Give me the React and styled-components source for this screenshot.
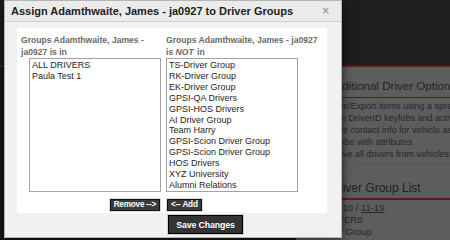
import React from "react";
import styled, { createGlobalStyle } from "styled-components";

const Global = createGlobalStyle`
  html, body { margin: 0; padding: 0; background: #181818; }
  body { font-family: "Liberation Sans", Arial, sans-serif; }
`;

const Stage = styled.div`
  position: relative;
  width: 450px;
  height: 240px;
  overflow: hidden;
`;

/* ---------- background page ---------- */
const PageBg = styled.div`
  display: flex;
  flex-direction: column;
  width: 100%;
  height: 100%;
  background: #3e3e3e;
`;

const TopBar = styled.div`
  height: 65px;
  background: #4b4b4b;
  border-bottom: 2px solid #ff3a3a;
  flex: none;
`;

const PageRow = styled.div`
  display: flex;
  flex: 1;
`;

const Side = styled.div`
  width: 296px;
  flex: none;
`;

const Main = styled.div`
  flex: 1;
  min-width: 0;
  overflow: hidden;
  background: #e8e8e8;
  color: #666;
  font-family: "Liberation Sans", Arial, sans-serif;
`;

const SectionHead = styled.div`
  height: 31px;
  box-sizing: border-box;
  padding: 12px 0 0 32px;
  font-size: 11.6px;
  line-height: 14px;
  color: #555;
  white-space: nowrap;
  border-bottom: 1px solid #ff3a3a;
`;

const LinkList = styled.div`
  padding: 2px 0 3px 23px;
  font-size: 9px;
  line-height: 12px;
  white-space: nowrap;
  border-bottom: 1px solid #d4d4d4;
`;

const SectionHead2 = styled.div`
  height: 36px;
  box-sizing: border-box;
  padding: 17px 0 0 34px;
  font-size: 12px;
  line-height: 14px;
  color: #555;
  white-space: nowrap;
  border-bottom: 2px solid #ff3a3a;
`;

const Pager = styled.div`
  padding: 2px 0 0 38px;
  font-size: 9.5px;
  line-height: 12px;
  white-space: nowrap;
  a { color: #666; text-decoration: underline; }
`;

const GroupRow = styled.div`
  padding-left: 6px;
  font-size: 9.5px;
  line-height: 12px;
  white-space: nowrap;
`;

const Overlay = styled.div`
  position: absolute;
  inset: 0;
  background: rgba(0, 0, 0, 0.6);
`;

/* ---------- dialog ---------- */
const Dialog = styled.div`
  position: absolute;
  left: 4px;
  top: 0;
  width: 338px;
  box-sizing: border-box;
  background: #f1f1f1;
  border: 1px solid #b5b5b5;
  box-shadow: 0 0 10px rgba(0, 0, 0, 0.7);
  display: flex;
  flex-direction: column;
`;

const TitleBar = styled.div`
  height: 21px;
  box-sizing: border-box;
  display: flex;
  align-items: center;
  justify-content: space-between;
  padding: 0 11px 0 6px;
  background: #ebebeb;
  border-bottom: 1px solid #cfcfcf;
`;

const Title = styled.div`
  font-family: "Liberation Sans", Arial, sans-serif;
  font-weight: bold;
  font-size: 11px;
  color: #222;
  white-space: nowrap;
`;

const Close = styled.span`
  font-family: "DejaVu Sans", sans-serif;
  font-size: 10px;
  color: #8a8a8a;
  line-height: 1;
`;

const Body = styled.div`
  padding: 6px 14px 3px 12px;
`;

const Panel = styled.div`
  background: #fff;
  padding: 6px 4px 2px 4px;
  display: grid;
  grid-template-columns: 141px 157px;
  column-gap: 4px;
  row-gap: 0;
`;

const ColHead = styled.div`
  font-family: "Liberation Sans", Arial, sans-serif;
  font-weight: bold;
  font-size: 8.6px;
  line-height: 12px;
  color: #6a6a6a;
  em { font-style: italic; padding-right: 1px; }
`;

const ListBox = styled.div`
  justify-self: ${(p) => (p.$side === "left" ? "end" : "start")};
  margin-right: ${(p) => (p.$side === "left" ? "1px" : "0")};
  width: 132px;
  height: 134px;
  box-sizing: border-box;
  border: 1px solid #a3a3a3;
  background: #fff;
  padding: 1px 0 0 2px;
  overflow: hidden;
`;

const Option = styled.div`
  font-family: "Liberation Sans", Arial, sans-serif;
  font-size: 9px;
  line-height: 10.9px;
  color: #1e1e1e;
  white-space: nowrap;
`;

const SmallBtn = styled.button`
  justify-self: ${(p) => (p.$side === "left" ? "end" : "start")};
  margin: 7px ${(p) => (p.$side === "left" ? "2px" : "0")} 0 ${(p) => (p.$side === "left" ? "0" : "1px")};
  height: 12px;
  box-sizing: border-box;
  padding: 0 3px;
  background: #3a3a3a;
  border: 1px solid #111;
  outline: 1px solid #ddd;
  color: #fff;
  font-family: "Liberation Sans", Arial, sans-serif;
  font-weight: bold;
  font-size: 8.2px;
  letter-spacing: -0.2px;
  line-height: 10px;
  border-radius: 0;
  white-space: nowrap;
`;

const Footer = styled.div`
  display: flex;
  padding: 2px 0 0 151px;
`;

const SaveBtn = styled.button`
  height: 19px;
  width: 75px;
  box-sizing: border-box;
  padding: 0;
  background: #333;
  border: 1px solid #000;
  outline: 1px solid #d0d0d0;
  color: #fff;
  font-family: "Liberation Sans", Arial, sans-serif;
  font-weight: bold;
  font-size: 8.8px;
  letter-spacing: -0.15px;
  border-radius: 0;
  white-space: nowrap;
`;

const inGroups = ["ALL DRIVERS", "Paula Test 1"];
const notInGroups = [
  "TS-Driver Group",
  "RK-Driver Group",
  "EK-Driver Group",
  "GPSI-QA Drivers",
  "GPSI-HOS Drivers",
  "AI Driver Group",
  "Team Harry",
  "GPSI-Scion Driver Group",
  "GPSI-Scion Driver Group",
  "HOS Drivers",
  "XYZ University",
  "Alumni Relations",
];

export default function App() {
  return (
    <>
      <Global />
      <Stage>
        <PageBg>
          <TopBar />
          <PageRow>
            <Side />
            <Main>
              <SectionHead>Additional Driver Options</SectionHead>
              <LinkList>
                <div>Update/Export items using a spreadsheet</div>
                <div>Assign DriverID keyfobs and activate</div>
                <div>Update contact info for vehicle assignments</div>
                <div>Describe with attributes</div>
                <div>Remove all drivers from vehicles</div>
              </LinkList>
              <SectionHead2>Driver Group List</SectionHead2>
              <Pager>
                1-10 / <a>11-19</a>
              </Pager>
              <GroupRow>ALL DRIVERS</GroupRow>
              <GroupRow>TS-Driver Group</GroupRow>
            </Main>
          </PageRow>
        </PageBg>
        <Overlay />
        <Dialog>
          <TitleBar>
            <Title>Assign Adamthwaite, James - ja0927 to Driver Groups</Title>
            <Close>×</Close>
          </TitleBar>
          <Body>
            <Panel>
              <ColHead>Groups Adamthwaite, James - ja0927 is in</ColHead>
              <ColHead>
                Groups Adamthwaite, James - ja0927 is <em>NOT</em> in
              </ColHead>
              <ListBox $side="left">
                {inGroups.map((g, i) => (
                  <Option key={i}>{g}</Option>
                ))}
              </ListBox>
              <ListBox $side="right">
                {notInGroups.map((g, i) => (
                  <Option key={i}>{g}</Option>
                ))}
              </ListBox>
              <SmallBtn $side="left">Remove --&gt;</SmallBtn>
              <SmallBtn $side="right">&lt;-- Add</SmallBtn>
            </Panel>
            <Footer>
              <SaveBtn>Save Changes</SaveBtn>
            </Footer>
          </Body>
        </Dialog>
      </Stage>
    </>
  );
}
